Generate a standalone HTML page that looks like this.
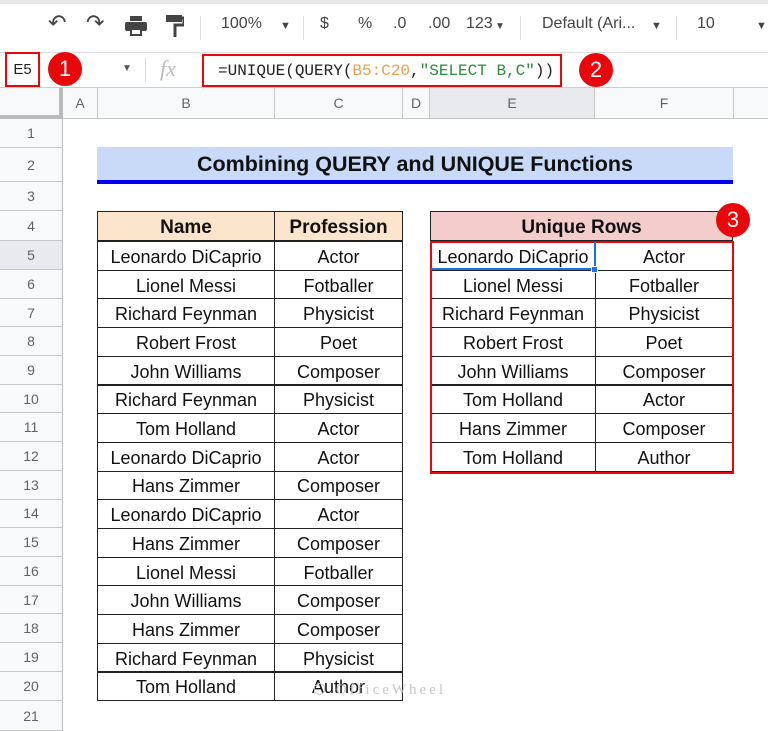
<!DOCTYPE html>
<html><head><meta charset="utf-8"><style>
*{margin:0;padding:0;box-sizing:border-box}
body{width:768px;height:731px;overflow:hidden;background:#fff;font-family:"Liberation Sans",Arial,sans-serif;position:relative;color:#222}
.a{position:absolute}
.rh{position:absolute;left:0;width:62px;background:#f8f9fa;border-bottom:1px solid #c4c7c5;color:#5f6368;font-size:14px;text-align:center;display:flex;align-items:center;justify-content:center}
.ch{position:absolute;top:88px;height:31px;background:#f8f9fa;border-right:1px solid #c4c7c5;border-bottom:1px solid #c4c7c5;color:#5f6368;font-size:14px;display:flex;align-items:center;justify-content:center}
.c{position:absolute;display:flex;align-items:center;justify-content:center;font-size:18px;color:#111;border:1px solid #222;margin:-1px 0 0 -1px;white-space:nowrap;padding-top:3px}
.circ{position:absolute;width:34px;height:34px;border-radius:50%;background:#e8080c;color:#fff;font-size:22px;display:flex;align-items:center;justify-content:center}
.tb{position:absolute;top:15px;font-size:16px;color:#444}
</style></head><body>
<div class="a" style="left:0;top:0;width:768px;height:4px;background:#e8e8e8"></div>
<div class="tb" style="left:48px;font-size:22px;top:10px">&#x21B6;</div>
<div class="tb" style="left:86px;font-size:22px;top:10px">&#x21B7;</div>
<svg class="a" style="left:125px;top:16px" width="22" height="20" viewBox="0 0 22 20"><rect x="5" y="0" width="12" height="5" fill="#444"/><rect x="0" y="6" width="22" height="9" rx="2" fill="#444"/><rect x="5" y="12" width="12" height="8" fill="#444"/><rect x="7" y="14" width="8" height="4" fill="#fff"/></svg>
<svg class="a" style="left:166px;top:15px" width="18" height="22" viewBox="0 0 18 22"><rect x="0" y="0" width="16" height="7" fill="#444"/><path d="M16 3h2v7H9v12" stroke="#444" stroke-width="3" fill="none"/></svg>
<div class="a" style="left:200px;top:16px;width:1px;height:24px;background:#ddd"></div>
<div class="tb" style="left:221px">100%</div><div class="tb" style="left:280px;font-size:11px;top:20px">▼</div>
<div class="a" style="left:303px;top:16px;width:1px;height:24px;background:#ddd"></div>
<div class="tb" style="left:320px">$</div><div class="tb" style="left:358px">%</div>
<div class="tb" style="left:393px">.0</div><div class="tb" style="left:428px">.00</div>
<div class="tb" style="left:466px">123</div><div class="tb" style="left:495px;font-size:10px;top:21px">▼</div>
<div class="a" style="left:520px;top:16px;width:1px;height:24px;background:#ddd"></div>
<div class="tb" style="left:542px">Default (Ari...</div><div class="tb" style="left:651px;font-size:11px;top:20px">▼</div>
<div class="a" style="left:676px;top:16px;width:1px;height:24px;background:#ddd"></div>
<div class="tb" style="left:697px">10</div><div class="tb" style="left:756px;font-size:11px;top:20px">▼</div>
<div class="a" style="left:0;top:52px;width:768px;height:1px;background:#ddd"></div>
<div class="a" style="left:5px;top:52px;width:35px;height:35px;border:2px solid #e8080c;font-size:15px;display:flex;align-items:center;justify-content:center">E5</div>
<div class="circ" style="left:48px;top:52px">1</div>
<div class="a" style="left:122px;top:63px;font-size:10px;color:#555">▼</div>
<div class="a" style="left:145px;top:58px;width:1px;height:24px;background:#ddd"></div>
<div class="a" style="left:160px;top:56px;font-size:22px;color:#bbb;font-family:'Liberation Serif',serif;font-style:italic">fx</div>
<div class="a" style="left:202px;top:54px;width:360px;height:33px;border:2px solid #e8080c;font-size:16px;padding:6px 0 0 14px;font-family:'Liberation Mono',monospace;letter-spacing:0;white-space:nowrap;color:#222">=UNIQUE(QUERY(<span style="color:#e8a050">B5:C20</span>,<span style="color:#2a8c3a">"SELECT B,C"</span>))</div>
<div class="circ" style="left:579px;top:53px">2</div>
<div class="a" style="left:0;top:87px;width:768px;height:1px;background:#ccc"></div>
<div class="a" style="left:0;top:88px;width:63px;height:31px;background:#f8f9fa;border-right:4px solid #bbb;border-bottom:4px solid #bbb"></div>
<div class="ch" style="left:63px;width:35px">A</div>
<div class="ch" style="left:98px;width:177px">B</div>
<div class="ch" style="left:275px;width:128px">C</div>
<div class="ch" style="left:403px;width:27px">D</div>
<div class="ch" style="left:430px;width:165px;background:#e8eaed">E</div>
<div class="ch" style="left:595px;width:139px">F</div>
<div class="ch" style="left:734px;width:40px"></div>
<div class="a" style="left:62px;top:119px;width:1px;height:612px;background:#bbb"></div>
<div class="rh" style="top:119px;height:29px">1</div>
<div class="rh" style="top:148px;height:34px">2</div>
<div class="rh" style="top:182px;height:29px">3</div>
<div class="rh" style="top:211px;height:30px">4</div>
<div class="rh" style="top:241px;height:29px;background:#e8eaed">5</div>
<div class="rh" style="top:270px;height:28.7px">6</div>
<div class="rh" style="top:298.7px;height:28.7px">7</div>
<div class="rh" style="top:327.4px;height:28.7px">8</div>
<div class="rh" style="top:356.1px;height:28.7px">9</div>
<div class="rh" style="top:384.8px;height:28.7px">10</div>
<div class="rh" style="top:413.5px;height:28.7px">11</div>
<div class="rh" style="top:442.2px;height:28.7px">12</div>
<div class="rh" style="top:470.9px;height:28.7px">13</div>
<div class="rh" style="top:499.6px;height:28.7px">14</div>
<div class="rh" style="top:528.3px;height:28.7px">15</div>
<div class="rh" style="top:557px;height:28.7px">16</div>
<div class="rh" style="top:585.7px;height:28.7px">17</div>
<div class="rh" style="top:614.4px;height:28.7px">18</div>
<div class="rh" style="top:643.1px;height:28.7px">19</div>
<div class="rh" style="top:671.8px;height:29.2px">20</div>
<div class="rh" style="top:701px;height:30px">21</div>
<div class="a" style="left:97px;top:147px;width:636px;height:33px;background:#c9daf8;font-weight:bold;font-size:21.5px;display:flex;align-items:center;justify-content:center;color:#111;padding-top:2px">Combining QUERY and UNIQUE Functions</div>
<div class="a" style="left:97px;top:180px;width:636px;height:4px;background:#0000ee"></div>
<div class="c" style="left:98px;top:212px;width:178px;height:30px;background:#fce5cd;font-weight:bold;font-size:19px">Name</div>
<div class="c" style="left:275px;top:212px;width:129px;height:30px;background:#fce5cd;font-weight:bold;font-size:19px">Profession</div>
<script>
var L=[["Leonardo DiCaprio","Actor"],["Lionel Messi","Fotballer"],["Richard Feynman","Physicist"],["Robert Frost","Poet"],["John Williams","Composer"],["Richard Feynman","Physicist"],["Tom Holland","Actor"],["Leonardo DiCaprio","Actor"],["Hans Zimmer","Composer"],["Leonardo DiCaprio","Actor"],["Hans Zimmer","Composer"],["Lionel Messi","Fotballer"],["John Williams","Composer"],["Hans Zimmer","Composer"],["Richard Feynman","Physicist"],["Tom Holland","Author"]];
var U=[["Leonardo DiCaprio","Actor"],["Lionel Messi","Fotballer"],["Richard Feynman","Physicist"],["Robert Frost","Poet"],["John Williams","Composer"],["Tom Holland","Actor"],["Hans Zimmer","Composer"],["Tom Holland","Author"]];
var h="";
for(var i=0;i<16;i++){var t=242+i*28.7;
h+='<div class="c" style="left:98px;top:'+t+'px;width:178px;height:29.7px">'+L[i][0]+'</div><div class="c" style="left:275px;top:'+t+'px;width:129px;height:29.7px">'+L[i][1]+'</div>';}
for(var i=0;i<8;i++){var t=242+i*28.7;
h+='<div class="c" style="left:431px;top:'+t+'px;width:166px;height:29.7px">'+U[i][0]+'</div><div class="c" style="left:596px;top:'+t+'px;width:138px;height:29.7px">'+U[i][1]+'</div>';}
document.write(h);
</script>
<div class="c" style="left:431px;top:212px;width:303px;height:30px;background:#f4cccc;font-weight:bold;font-size:19px">Unique Rows</div>
<div class="a" style="left:430px;top:241px;width:304px;height:233px;border:2px solid #e8080c"></div>
<div class="a" style="left:431px;top:268px;width:165px;height:2px;background:#1a73e8"></div>
<div class="a" style="left:594px;top:242px;width:2px;height:27px;background:#1a73e8"></div>
<div class="a" style="left:591px;top:266px;width:7px;height:7px;background:#1a73e8;border:1px solid #fff"></div>
<div class="circ" style="left:716px;top:203px">3</div>
<div class="a" style="left:313px;top:680px;font-size:15px;color:#c8c8c8;letter-spacing:3px;font-family:'Liberation Serif',serif">⬡ OfficeWheel</div>
</body></html>
